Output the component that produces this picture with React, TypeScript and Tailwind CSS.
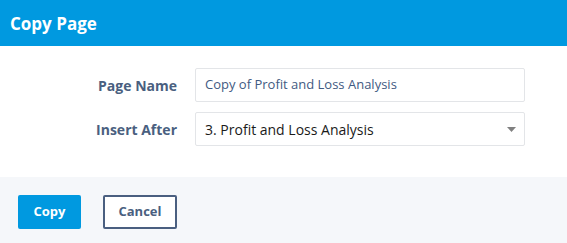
import React from "react";

export default function App() {
  return (
    <div className="w-[567px] h-[243px] bg-white flex flex-col" style={{ fontFamily: '"Open Sans", sans-serif' }}>
      <div className="h-[46px] bg-[#0099e0] flex items-center px-[10px]">
        <span className="text-white font-bold text-[17px] leading-none">Copy Page</span>
      </div>
      <div className="pt-[22px] pb-[31px] flex flex-col gap-[10px]">
        <div className="flex items-center">
          <label className="w-[177px] text-right text-[14px] font-bold text-[#4a5f80]">Page Name</label>
          <div className="ml-[18px] w-[330px] h-[34px] border border-[#e3e5e8] rounded-[2px] flex items-center px-[9px] text-[13px] text-[#3f5a82]">
            Copy of Profit and Loss Analysis
          </div>
        </div>
        <div className="flex items-center">
          <label className="w-[177px] text-right text-[14px] font-bold text-[#4a5f80]">Insert After</label>
          <div className="ml-[18px] w-[330px] h-[34px] border border-[#e3e5e8] rounded-[2px] flex items-center justify-between pl-[9px] pr-[8px] text-[14px] text-[#1a1a1a]">
            <span>3. Profit and Loss Analysis</span>
            <svg width="9" height="5" viewBox="0 0 9 5"><path d="M0 0H9L4.5 5Z" fill="#808080" /></svg>
          </div>
        </div>
      </div>
      <div className="flex-1 bg-[#f5f7fa] flex items-start pt-[18px] pl-[18px] gap-[22px]">
        <button className="w-[63px] h-[34px] bg-[#0099e0] rounded-[2px] text-white font-bold text-[13px]">Copy</button>
        <button className="w-[74px] h-[34px] border-2 border-[#4a5f80] rounded-[2px] bg-white text-[#4a5f80] font-bold text-[13px]">Cancel</button>
      </div>
    </div>
  );
}
